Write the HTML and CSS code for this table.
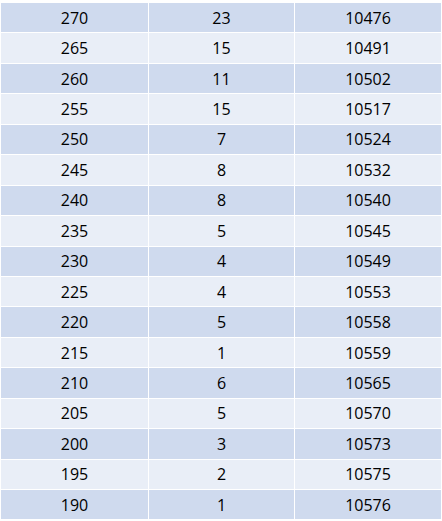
FILE: index.html
```html
<!DOCTYPE html>
<html>
<head>
<meta charset="utf-8">
<link rel="stylesheet" href="styles.css">
</head>
<body>
<div class="table">
  <div class="row dark"><div class="cell">270</div><div class="cell">23</div><div class="cell">10476</div></div>
  <div class="row light"><div class="cell">265</div><div class="cell">15</div><div class="cell">10491</div></div>
  <div class="row dark"><div class="cell">260</div><div class="cell">11</div><div class="cell">10502</div></div>
  <div class="row light"><div class="cell">255</div><div class="cell">15</div><div class="cell">10517</div></div>
  <div class="row dark"><div class="cell">250</div><div class="cell">7</div><div class="cell">10524</div></div>
  <div class="row light"><div class="cell">245</div><div class="cell">8</div><div class="cell">10532</div></div>
  <div class="row dark"><div class="cell">240</div><div class="cell">8</div><div class="cell">10540</div></div>
  <div class="row light"><div class="cell">235</div><div class="cell">5</div><div class="cell">10545</div></div>
  <div class="row dark"><div class="cell">230</div><div class="cell">4</div><div class="cell">10549</div></div>
  <div class="row light"><div class="cell">225</div><div class="cell">4</div><div class="cell">10553</div></div>
  <div class="row dark"><div class="cell">220</div><div class="cell">5</div><div class="cell">10558</div></div>
  <div class="row light"><div class="cell">215</div><div class="cell">1</div><div class="cell">10559</div></div>
  <div class="row dark"><div class="cell">210</div><div class="cell">6</div><div class="cell">10565</div></div>
  <div class="row light"><div class="cell">205</div><div class="cell">5</div><div class="cell">10570</div></div>
  <div class="row dark"><div class="cell">200</div><div class="cell">3</div><div class="cell">10573</div></div>
  <div class="row light"><div class="cell">195</div><div class="cell">2</div><div class="cell">10575</div></div>
  <div class="row dark"><div class="cell">190</div><div class="cell">1</div><div class="cell">10576</div></div>
</div>
</body>
</html>
```

FILE: styles.css
```css
html, body {
  margin: 0;
  padding: 0;
  background: #ffffff;
}
.table {
  margin: 3px 0 0 1px;
  width: 440px;
  display: grid;
  grid-auto-rows: 29.45px;
  row-gap: 1px;
  font-family: "Open Sans", "Liberation Sans", sans-serif;
  font-size: 16px;
  color: #000000;
}
.row {
  display: grid;
  grid-template-columns: 147px 145px 146px;
  column-gap: 1px;
}
.cell {
  display: flex;
  align-items: center;
  justify-content: center;
}
.dark .cell {
  background: #cfdaee;
}
.light .cell {
  background: #e9eef7;
}
```
